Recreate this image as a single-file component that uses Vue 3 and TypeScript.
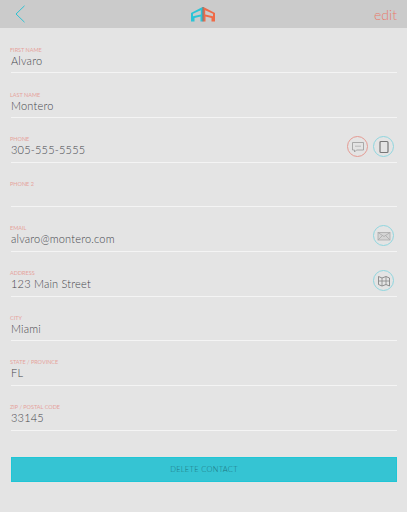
<script setup lang="ts">
interface Field {
  label: string
  value: string
  actions?: { icon: string; tone: 'red' | 'teal' }[]
}

const fields: Field[] = [
  { label: 'FIRST NAME', value: 'Alvaro' },
  { label: 'LAST NAME', value: 'Montero' },
  {
    label: 'PHONE',
    value: '305-555-5555',
    actions: [
      { icon: 'chat', tone: 'red' },
      { icon: 'tablet', tone: 'teal' }
    ]
  },
  { label: 'PHONE 2', value: '' },
  { label: 'EMAIL', value: 'alvaro@montero.com', actions: [{ icon: 'mail', tone: 'teal' }] },
  { label: 'ADDRESS', value: '123 Main Street', actions: [{ icon: 'map', tone: 'teal' }] },
  { label: 'CITY', value: 'Miami' },
  { label: 'STATE / PROVINCE', value: 'FL' },
  { label: 'ZIP / POSTAL CODE', value: '33145' }
]
</script>

<template>
  <div class="screen">
    <header class="topbar">
      <svg class="back" width="12" height="18" viewBox="0 0 12 18">
        <path d="M10.5 .8 2 9l8.5 8.2" fill="none" stroke="#2fc3d3" stroke-width="1" />
      </svg>
      <svg class="logo" width="24" height="15" viewBox="0 0 24 15">
        <path d="M0 6 11.500 0v14.500H9.500v-5L3.500 11v3.500H0Z M2 6.800V9.300l7.800-1.800V3.200Z" fill="#2bc4d6" fill-rule="evenodd" />
        <path d="M24 6 12.500 0v14.500H14.500v-5l6 1.500v3.500H24Z M22 6.800V9.300l-7.800-1.800V3.200Z" fill="#ef6a47" fill-rule="evenodd" />
        <path d="M11.500 0h1v14.500h-1Z" fill="#6b5a55" />
      </svg>
      <span class="edit">edit</span>
    </header>

    <main class="form">
      <div v-for="field in fields" :key="field.label" class="field">
        <div class="text">
          <label class="label">{{ field.label }}</label>
          <div class="value">{{ field.value }}</div>
        </div>
        <div v-if="field.actions" class="actions">
          <span v-for="action in field.actions" :key="action.icon" class="action" :class="action.tone">
            <svg width="14" height="14" viewBox="0 0 14 14" fill="none" stroke="#999" stroke-width=".8">
              <template v-if="action.icon === 'chat'">
                <path d="M1.500 2.500h11v7.500H5.500L3.500 12V10h-2Z" />
                <path d="M4.500 6.200h1M6.500 6.200h1M8.500 6.200h1" stroke="#777" />
              </template>
              <template v-else-if="action.icon === 'tablet'">
                <rect x="3" y="1.500" width="8" height="11" rx="1" stroke="#777" stroke-width="1.200" />
              </template>
              <template v-else-if="action.icon === 'mail'">
                <rect x="1" y="3.500" width="12" height="7.500" fill="#d4d4d4" stroke="#aaa" />
                <path d="M1 3.500l6 4 6-4M1 11l4.500-4.500M13 11 8.500 6.500" stroke="#aaa" />
              </template>
              <template v-else>
                <path d="M1.500 2.500l3.500 1.500 4-1.500 3.500 1.500v8l-3.500-1.500-4 1.500-3.500-1.500Z" stroke="#777" />
                <path d="M5 4v8M9 2.500v8M1.500 7h11" stroke="#888" />
              </template>
            </svg>
          </span>
        </div>
      </div>

      <button class="delete" type="button">DELETE CONTACT</button>
    </main>
  </div>
</template>

<style>
html,
body {
  margin: 0;
  background: #e4e4e4;
}
</style>

<style scoped>
.screen {
  width: 407px;
  height: 512px;
  overflow: hidden;
  background: #e4e4e4;
  font-family: Lato, "Open Sans", sans-serif;
}
.topbar {
  display: flex;
  align-items: center;
  justify-content: space-between;
  height: 28px;
  padding: 0 10px 0 14px;
  background: #cbcbcb;
}
.back {
  margin-top: -1px;
}
.logo {
  margin-left: 6px;
  margin-top: 1px;
}
.edit {
  font-size: 14px;
  font-weight: 300;
  color: #e87c6c;
}
.form {
  display: flex;
  flex-direction: column;
  padding: .7px 10px 0 11px;
}
.field {
  display: flex;
  align-items: flex-end;
  justify-content: space-between;
  height: 44.67px;
  box-sizing: border-box;
  border-bottom: 1px solid #f4f4f4;
  padding-bottom: 4.500px;
}
.label {
  display: block;
  margin-left: -1px;
  font-size: 5.500px;
  line-height: 6px;
  color: #e5a39c;
}
.value {
  height: 15px;
  font-size: 11px;
  line-height: 15px;
  font-weight: 300;
  letter-spacing: .2px;
  color: #44464c;
}
.actions {
  display: flex;
  gap: 5px;
  margin-right: 3px;
}
.action {
  display: flex;
  align-items: center;
  justify-content: center;
  box-sizing: border-box;
  width: 21px;
  height: 21px;
  border-radius: 50%;
  border: 1px solid;
}
.action.red {
  border-color: #e49a92;
}
.action.teal {
  border-color: #8fd6df;
}
.delete {
  display: block;
  width: 386px;
  height: 25px;
  margin-top: 26px;
  padding: 0;
  border: 1px solid #1fc6d6;
  background: #35c4d3;
  font-family: inherit;
  font-size: 7.500px;
  font-weight: 300;
  letter-spacing: .3px;
  color: #1f7480;
}
</style>
